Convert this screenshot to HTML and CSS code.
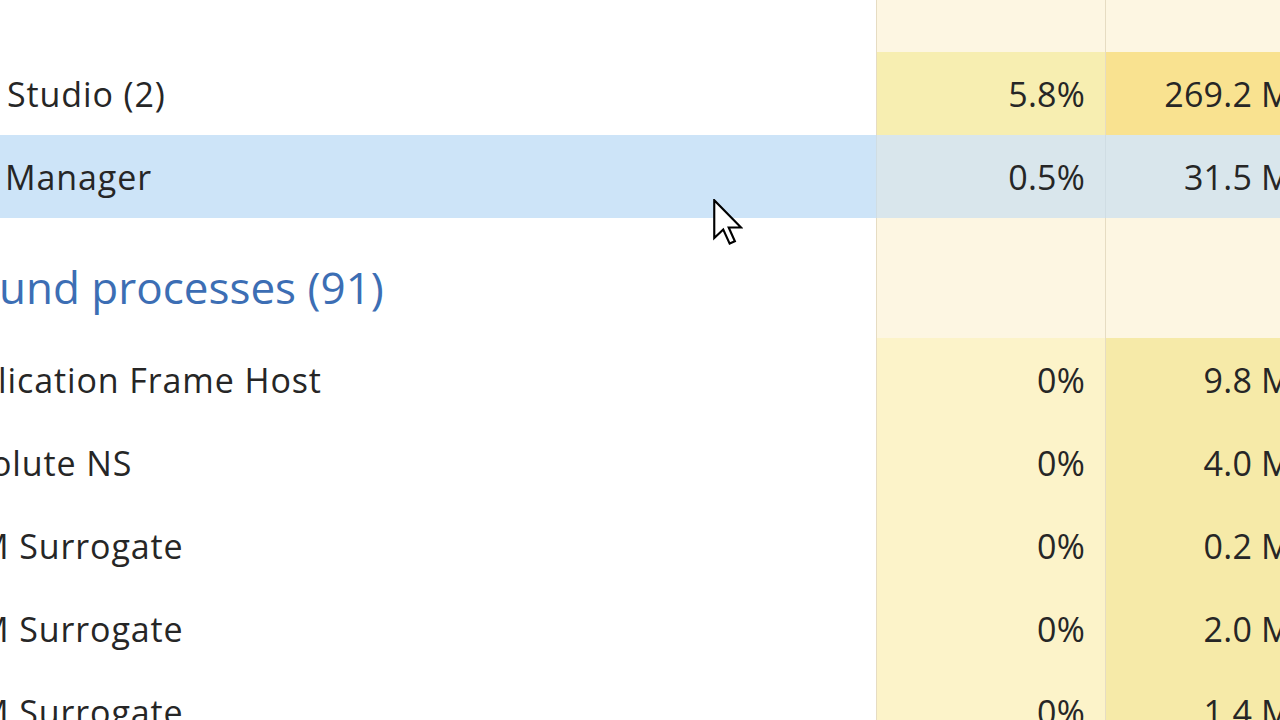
FILE: index.html
```html
<!DOCTYPE html>
<html>
<head>
<meta charset="utf-8">
<link rel="stylesheet" href="styles.css">
</head>
<body>
<div class="table">
  <div class="row top">
    <div class="name"></div>
    <div class="cpu"></div>
    <div class="mem"></div>
  </div>
  <div class="row studio">
    <div class="name"><span class="pre"><span>Visual </span></span><span class="vis s-studio">Studio (2)</span></div>
    <div class="cpu">5.8%</div>
    <div class="mem">269.2 MB</div>
  </div>
  <div class="row selected">
    <div class="name"><span class="pre"><span>Task </span></span><span class="vis s-manager">Manager</span></div>
    <div class="cpu">0.5%</div>
    <div class="mem">31.5 MB</div>
  </div>
  <div class="row group">
    <div class="name"><span class="pre"><span>Backgro</span></span><span class="vis s-group">und processes (91)</span></div>
    <div class="cpu"></div>
    <div class="mem"></div>
  </div>
  <div class="row proc">
    <div class="name"><span class="pre"><span>App</span></span><span class="vis s-app">lication Frame Host</span></div>
    <div class="cpu">0%</div>
    <div class="mem">9.8 MB</div>
  </div>
  <div class="row proc">
    <div class="name"><span class="pre"><span>Abs</span></span><span class="vis s-abs">olute NS</span></div>
    <div class="cpu">0%</div>
    <div class="mem">4.0 MB</div>
  </div>
  <div class="row proc">
    <div class="name"><span class="pre"><span>CO</span></span><span class="vis s-com">M Surrogate</span></div>
    <div class="cpu">0%</div>
    <div class="mem">0.2 MB</div>
  </div>
  <div class="row proc">
    <div class="name"><span class="pre"><span>CO</span></span><span class="vis s-com">M Surrogate</span></div>
    <div class="cpu">0%</div>
    <div class="mem">2.0 MB</div>
  </div>
  <div class="row proc">
    <div class="name"><span class="pre"><span>CO</span></span><span class="vis s-com">M Surrogate</span></div>
    <div class="cpu">0%</div>
    <div class="mem">1.4 MB</div>
  </div>
</div>
<svg class="cursor" width="30" height="46" viewBox="0 0 12.6 19.4">
  <path d="M0.5 0.5 L0.5 16.5 L4.3 12.9 L7 18.8 L9.2 17.8 L6.6 12 L11.8 12 Z" fill="#fff" stroke="#000" stroke-width="0.9" stroke-linejoin="miter"/>
</svg>
</body>
</html>
```

FILE: styles.css
```css
html, body {
  margin: 0;
  padding: 0;
  overflow: hidden;
  background: #ffffff;
  width: 1280px;
  height: 720px;
}

body {
  font-family: "Open Sans", "Noto Sans", "DejaVu Sans", sans-serif;
  color: #262626;
  position: relative;
}

.table {
  width: 1334px;
  display: flex;
  flex-direction: column;
}

.row {
  display: grid;
  grid-template-columns: 876px 229px 229px;
  height: 83px;
  font-size: 34px;
  line-height: 1;
  letter-spacing: 0.9px;
}

.row > div {
  display: flex;
  align-items: center;
  white-space: nowrap;
  overflow: hidden;
}

.row .cpu,
.row .mem {
  justify-content: flex-end;
  padding-right: 20px;
  box-sizing: border-box;
  border-left: 1px solid #e6dcc2;
  letter-spacing: 0.2px;
}

.name {
  background: #ffffff;
}

.pre {
  display: flex;
  justify-content: flex-end;
  width: 0;
  flex: none;
}

.vis {
  flex: none;
}

.s-studio { margin-left: 7px; }
.s-manager { margin-left: 5px; }
.s-group { margin-left: -1px; }
.s-app { margin-left: -2px; }
.s-abs { margin-left: -9px; }
.s-com { margin-left: -22px; }

.top {
  height: 52px;
}
.top .cpu, .top .mem { background: #fdf6e2; }

.studio .cpu { background: #f7eeb1; }
.studio .mem { background: #f9e290; }

.selected .name { background: #cde4f8; }
.selected .cpu, .selected .mem { background: #d9e6ec; border-left-color: #d0dde3; }

.group {
  height: 120px;
}
.group .name {
  color: #3c6eb4;
  font-size: 44px;
  letter-spacing: 0;
  padding-top: 18px;
}
.group .cpu, .group .mem { background: #fdf6e2; }

.proc .cpu { background: #fcf3c9; }
.proc .mem { background: #f6eaa8; }

.cursor {
  position: absolute;
  left: 713px;
  top: 199px;
}
```
